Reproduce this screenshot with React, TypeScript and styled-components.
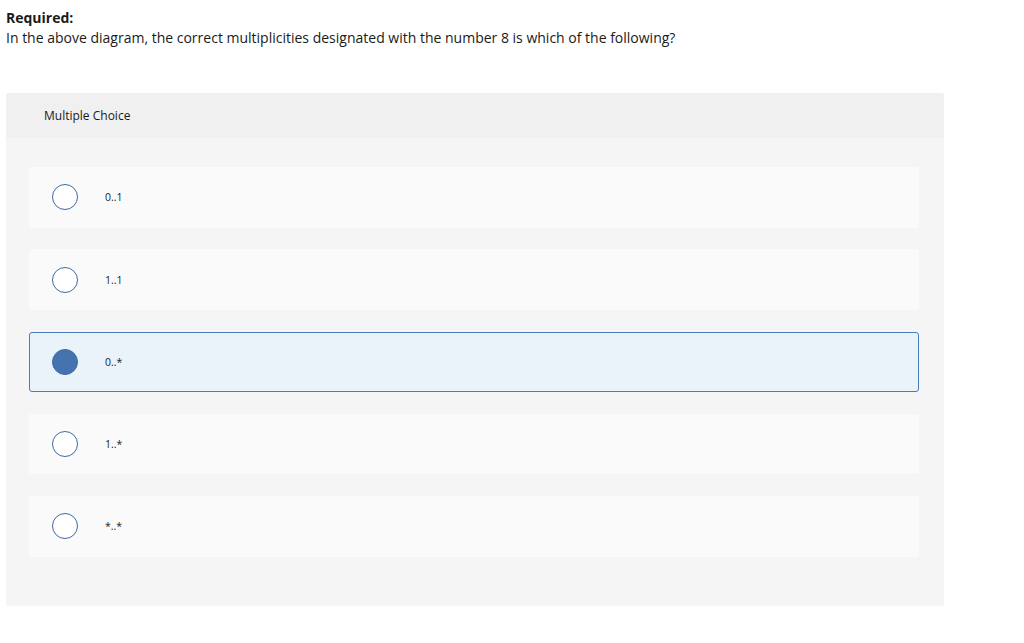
import React from "react";
import styled, { createGlobalStyle } from "styled-components";

const GlobalStyle = createGlobalStyle`
	body {
		margin: 0;
		background: #ffffff;
		font-family: "Open Sans", "Liberation Sans", Arial, sans-serif;
		color: #1a1a1a;
	}
`;

const Page = styled.div`
	padding: 8px 80px 0 6px;
`;

const Prompt = styled.div`
	font-size: 14px;
	line-height: 20px;
`;

const Required = styled.div`
	font-weight: 700;
`;

const Panel = styled.div`
	margin-top: 45px;
	width: 938px;
	background: #f5f5f5;
	border-radius: 3px;
	overflow: hidden;
	padding-bottom: 49.5px;
`;

const PanelHeader = styled.div`
	height: 45px;
	display: flex;
	align-items: center;
	padding-left: 38px;
	background: #f0f0f0;
	font-size: 12px;
`;

const Options = styled.div`
	display: flex;
	flex-direction: column;
	gap: 21.75px;
	padding: 29px 25px 0 23px;
`;

const Option = styled.label<{ $selected?: boolean }>`
	box-sizing: border-box;
	height: 60.5px;
	display: flex;
	align-items: center;
	padding-left: 22px;
	gap: 27px;
	border-radius: 3px;
	background: ${(p) => (p.$selected ? "#eaf2fa" : "#fafafa")};
	border: 1px solid ${(p) => (p.$selected ? "#4a7bba" : "transparent")};
	font-size: 10.5px;
	cursor: pointer;
`;

const Radio = styled.span<{ $checked?: boolean }>`
	box-sizing: border-box;
	width: 26px;
	height: 26px;
	border-radius: 50%;
	border: 1.5px solid #3f6aa0;
	background: ${(p) => (p.$checked ? "#4573b0" : "#ffffff")};
	flex-shrink: 0;
`;

const choices = ["0..1", "1..1", "0..*", "1..*", "*..*"];
const selectedIndex = 2;

export default function App() {
	return (
		<>
			<GlobalStyle />
			<Page>
				<Prompt>
					<Required>Required:</Required>
					In the above diagram, the correct multiplicities designated with the
					number 8 is which of the following?
				</Prompt>
				<Panel>
					<PanelHeader>Multiple Choice</PanelHeader>
					<Options>
						{choices.map((choice, index) => (
							<Option key={choice} $selected={index === selectedIndex}>
								<Radio $checked={index === selectedIndex} />
								{choice}
							</Option>
						))}
					</Options>
				</Panel>
			</Page>
		</>
	);
}
